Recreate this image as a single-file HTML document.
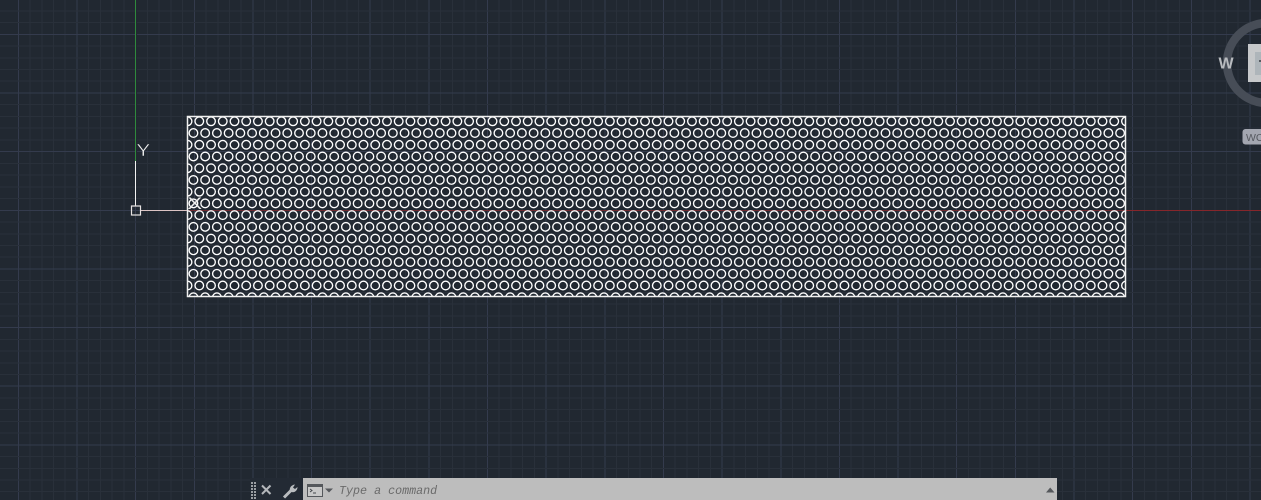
<!DOCTYPE html>
<html>
<head>
<meta charset="utf-8">
<style>
html,body{margin:0;padding:0;background:#212831;overflow:hidden;width:1261px;height:500px;}
body{position:relative;}
svg{position:absolute;left:0;top:0;display:block;filter:blur(0.35px);}
</style>
</head>
<body>
<svg width="1261" height="500" viewBox="0 0 1261 500" xmlns="http://www.w3.org/2000/svg">
  <defs>
    <g id="v1" shape-rendering="crispEdges">
      <path d="M18.3 0V500" stroke="#343b4d" stroke-width="1" fill="none"/>
      <path d="M30 0V500M41.8 0V500M53.5 0V500M65.2 0V500" stroke="#29303a" stroke-width="1" fill="none"/>
    </g>
    <g id="v2"><use href="#v1"/><use href="#v1" x="58.65"/></g>
    <g id="v4"><use href="#v2"/><use href="#v2" x="117.3"/></g>
    <g id="v8"><use href="#v4"/><use href="#v4" x="234.6"/></g>
    <g id="v16"><use href="#v8"/><use href="#v8" x="469.2"/></g>
    <g id="h1" shape-rendering="crispEdges">
      <path d="M0 34.3H1261" stroke="#343b4d" stroke-width="1" fill="none"/>
      <path d="M0 46H1261M0 57.8H1261M0 69.5H1261M0 81.2H1261" stroke="#29303a" stroke-width="1" fill="none"/>
    </g>
    <g id="h2"><use href="#h1"/><use href="#h1" y="58.65"/></g>
    <g id="h4"><use href="#h2"/><use href="#h2" y="117.3"/></g>
    <g id="h8"><use href="#h4"/><use href="#h4" y="234.6"/></g>

    <circle id="c" r="4.3" fill="none" stroke="#ffffff" stroke-width="1.35"/>
    <g id="r2"><use href="#c"/><use href="#c" x="11.73"/></g>
    <g id="r4"><use href="#r2"/><use href="#r2" x="23.46"/></g>
    <g id="r8"><use href="#r4"/><use href="#r4" x="46.92"/></g>
    <g id="r16"><use href="#r8"/><use href="#r8" x="93.84"/></g>
    <g id="r32"><use href="#r16"/><use href="#r16" x="187.68"/></g>
    <g id="r64"><use href="#r32"/><use href="#r32" x="375.36"/></g>
    <g id="row"><use href="#r64"/><use href="#r16" x="750.72"/><use href="#r2" x="938.4"/></g>
    <g id="pair"><use href="#row"/><use href="#row" x="5.865" y="11.73"/></g>
    <g id="p2"><use href="#pair"/><use href="#pair" y="23.46"/></g>
    <g id="p4"><use href="#p2"/><use href="#p2" y="46.92"/></g>
    <clipPath id="clip"><rect x="187" y="116" width="939" height="181"/></clipPath>
  </defs>

  <rect width="1261" height="500" fill="#212831"/>

  <!-- grid -->
  <use href="#v16"/>
  <use href="#v4" x="938.4"/>
  <use href="#v1" x="1173"/>
  <path d="M1250 0V500" stroke="#343b4d" stroke-width="1" fill="none" shape-rendering="crispEdges"/>
  <use href="#h8" y="-58.65"/>
  <use href="#h1" y="410.55"/>

  <!-- axes -->
  <rect x="135" y="0" width="2" height="162" fill="#212831"/>
  <rect x="135" y="0" width="1" height="162" fill="#2f8a3c"/>
  <path d="M1126 210.5H1261" stroke="#86262b" stroke-width="1" fill="none" shape-rendering="crispEdges"/>
  <path d="M187 210.5H1126" stroke="#6e2a30" stroke-width="1" fill="none" shape-rendering="crispEdges"/>

  <!-- mesh -->
  <g clip-path="url(#clip)">
    <g transform="translate(187.57 121.3)">
      <use href="#p4"/>
      <use href="#p4" y="93.84"/>
    </g>
  </g>
  <rect x="187.5" y="116.5" width="938" height="180" fill="none" stroke="#f0f0f0" stroke-width="1.5"/>

  <!-- UCS icon -->
  <path d="M135.5 161V206" stroke="#f2f2f2" stroke-width="1.2" fill="none" shape-rendering="crispEdges"/>
  <path d="M141 210.5H187" stroke="#dcc4c4" stroke-width="1.2" fill="none" shape-rendering="crispEdges"/>
  <rect x="131.5" y="206" width="9" height="9" fill="none" stroke="#e6e2e2" stroke-width="1.2"/>
  <text x="0" y="0" transform="translate(143.3 156) scale(1.15 1)" font-family="'Liberation Sans',sans-serif" font-size="18" text-anchor="middle" fill="#f0f0f0" stroke="#212831" stroke-width="0.45" paint-order="fill stroke">Y</text>
  <text x="0" y="0" transform="translate(187.5 209) scale(1.45 1.1)" font-family="'Liberation Sans',sans-serif" font-size="15" fill="#ececec">X</text>

  <!-- view cube -->
  <circle cx="1267" cy="63" r="40" fill="none" stroke="#474d57" stroke-width="8.5"/>
  <rect x="1248" y="44" width="13" height="38" fill="#c6c8ca"/>
  <rect x="1255" y="52" width="6" height="23" fill="#aeb5ba"/>
  <rect x="1259" y="60" width="2" height="2" fill="#555a60"/>
  <text x="1226" y="68.5" font-family="'Liberation Sans',sans-serif" font-size="16" font-weight="700" text-anchor="middle" fill="#b8bbbf">W</text>
  <rect x="1242.5" y="129" width="24" height="15.5" rx="3" fill="#a3a6b0"/>
  <text x="1246" y="141" font-family="'Liberation Sans',sans-serif" font-size="10.5" fill="#55585f">WC</text>

  <!-- command line -->
  <rect x="250" y="478" width="53" height="22" fill="#232a34"/>
  <rect x="303" y="478" width="754" height="22" fill="#bdbdbd"/>
  <g fill="#9a9ea3" shape-rendering="crispEdges">
    <rect x="251" y="482" width="2" height="2"/><rect x="254" y="482" width="2" height="2"/>
    <rect x="251" y="485" width="2" height="2"/><rect x="254" y="485" width="2" height="2"/>
    <rect x="251" y="488" width="2" height="2"/><rect x="254" y="488" width="2" height="2"/>
    <rect x="251" y="491" width="2" height="2"/><rect x="254" y="491" width="2" height="2"/>
    <rect x="251" y="494" width="2" height="2"/><rect x="254" y="494" width="2" height="2"/>
    <rect x="251" y="497" width="2" height="2"/><rect x="254" y="497" width="2" height="2"/>
  </g>
  <path d="M262 485.5L270.5 494M270.5 485.5L262 494" stroke="#b4b7bb" stroke-width="2" fill="none"/>
  <path d="M284 497.5L291 490.5" stroke="#b9bcbf" stroke-width="3" fill="none"/>
  <path d="M290 491.5C289 488 291 485 295 484.5L293 487.5L295 489L297.5 487C297.5 490.5 294.5 493 291.5 492Z" fill="#b9bcbf"/>
  <rect x="307.5" y="484.5" width="15" height="12" fill="#c8c8c8" stroke="#55585c" stroke-width="1"/>
  <rect x="307" y="484" width="16" height="3" fill="#55585c"/>
  <path d="M310 489L312 490.5L310 492M313 493H316" stroke="#44474b" stroke-width="1" fill="none"/>
  <path d="M325 488.5H333L329 492.5Z" fill="#55585c"/>
  <text x="339" y="494" font-family="'Liberation Mono',monospace" font-size="11.7" font-style="italic" fill="#6a6a6a">Type a command</text>
  <path d="M1046 492.5H1054.5L1050.2 487.5Z" fill="#55585c"/>
</svg>
</body>
</html>
